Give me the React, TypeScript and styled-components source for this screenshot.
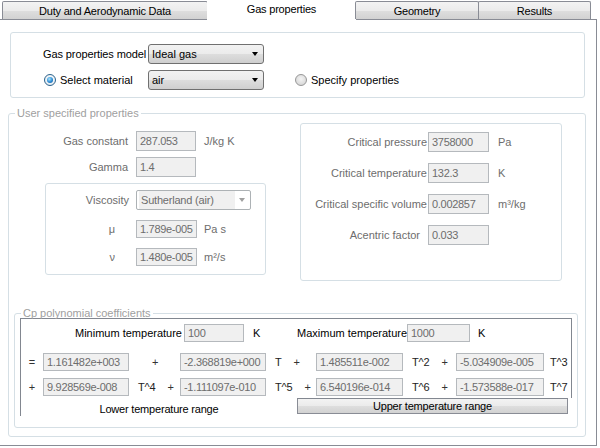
import React from 'react';
import styled, { createGlobalStyle, css } from 'styled-components';

const GlobalStyle = createGlobalStyle`
  html, body { margin: 0; padding: 0; background: #fff; }
  body {
    font-family: "Liberation Sans", Arial, sans-serif;
    font-size: 11px;
    color: #000;
  }
  * { box-sizing: border-box; }
`;

const GROUP_BORDER = '#d5dfe5';
const GRAY_TEXT = '#6d6d6d';
const TAB_BORDER = '#898c95';

const Window = styled.div`
  width: 600px;
  height: 448px;
  overflow: hidden;
  background: #fff;
`;

const TabStrip = styled.div`
  display: flex;
  align-items: flex-end;
  height: 19px;
  padding-left: 2px;
`;

const Tab = styled.div<{ $w: number; $active?: boolean }>`
  position: relative;
  z-index: 1;
  width: ${(p) => p.$w}px;
  display: flex;
  align-items: center;
  justify-content: center;
  white-space: nowrap;
  letter-spacing: -0.2px;
  ${(p) =>
    p.$active
      ? css`
          height: 20px;
          margin-bottom: -1px;
          padding-bottom: 3px;
          background: #fff;
        `
      : css`
          height: 18px;
          padding-top: 1px;
          border: 1px solid ${TAB_BORDER};
          border-bottom: none;
          border-radius: 2px 2px 0 0;
          background: linear-gradient(#f3f3f3 0%, #ebebeb 50%, #dedede 51%, #d2d2d2 100%);
          & + & {
            margin-left: -1px;
          }
        `}
`;

const Panel = styled.div`
  width: 597px;
  height: 427px;
  border: 1px solid ${TAB_BORDER};
  border-left: none;
  padding: 12px 10px 0 8px;
`;

const ModelBox = styled.div`
  margin: 0 1px 0 2px;
  height: 66px;
  border: 1px solid ${GROUP_BORDER};
  border-radius: 3px;
  padding: 11px 0 0 32px;
  display: grid;
  grid-template-columns: 105px 116px auto;
  grid-auto-rows: 20px;
  row-gap: 6px;
  align-items: center;
`;

const Label = styled.span<{ $gray?: boolean }>`
  color: ${(p) => (p.$gray ? GRAY_TEXT : '#000')};
  white-space: nowrap;
  letter-spacing: -0.1px;
`;

const Combo = styled.div<{ $w: number; $disabled?: boolean }>`
  position: relative;
  width: ${(p) => p.$w}px;
  height: 20px;
  display: flex;
  align-items: center;
  padding-left: 3px;
  white-space: nowrap;
  ${(p) =>
    p.$disabled
      ? css`
          border: 1px solid #adb2b5;
          border-radius: 2px;
          background: #fff;
          color: ${GRAY_TEXT};
        `
      : css`
          border: 1px solid #707070;
          border-radius: 3px;
          background: linear-gradient(#f2f2f2 0%, #ebebeb 50%, #dddddd 51%, #cfcfcf 100%);
        `}
`;

const ComboText = styled.span<{ $fill?: number }>`
  flex: ${(p) => (p.$fill ? `0 0 ${p.$fill}px` : '1')};
  height: 100%;
  display: flex;
  align-items: center;
  ${(p) =>
    p.$fill &&
    css`
      background: #f0f0f0;
      margin-left: -1px;
      padding-left: 2px;
      letter-spacing: -0.2px;
    `}
`;

const Arrow = styled.span<{ $disabled?: boolean }>`
  position: absolute;
  right: 5px;
  top: 7px;
  width: 0;
  height: 0;
  border-left: 3.5px solid transparent;
  border-right: 3.5px solid transparent;
  border-top: 4px solid ${(p) => (p.$disabled ? '#a0a0a0' : '#000')};
`;

const RadioLabel = styled.label<{ $offset?: number }>`
  display: flex;
  align-items: center;
  gap: 4px;
  margin-left: ${(p) => p.$offset ?? 1}px;
  white-space: nowrap;
`;

const RadioDot = styled.span<{ $checked?: boolean }>`
  width: 12px;
  height: 12px;
  border-radius: 50%;
  display: flex;
  align-items: center;
  justify-content: center;
  ${(p) =>
    p.$checked
      ? css`
          border: 1px solid #2c628b;
          background: radial-gradient(circle at 50% 40%, #ffffff, #dbe6ee);
          &::after {
            content: '';
            width: 6px;
            height: 6px;
            border-radius: 50%;
            background: radial-gradient(circle at 40% 35%, #a8e6ff 0%, #2a8ad4 55%, #0d4f8f 100%);
          }
        `
      : css`
          border: 1px solid #979797;
          background: radial-gradient(circle at 50% 40%, #f4f4f4, #cfcfcf);
        `}
`;

const UserSet = styled.fieldset`
  margin: 9px 0 0 0;
  padding: 3px 0 8px 0;
  border: 1px solid ${GROUP_BORDER};
  border-radius: 3px;
  min-width: 0;
`;

const Legend = styled.legend<{ $indent: number }>`
  margin-left: ${(p) => p.$indent}px;
  padding: 0 2px;
  color: #a0a0a0;
  line-height: 13px;
`;

const PropsGrid = styled.div`
  display: grid;
  grid-template-columns: 291px 262px;
  align-items: start;
`;

const LeftCol = styled.div`
  padding-top: 8px;
`;

const PropRow = styled.div`
  display: grid;
  grid-template-columns: 119px 60px auto;
  column-gap: 8px;
  align-items: center;
  height: 20px;
  margin-bottom: 6px;
`;

const RightLabel = styled.span<{ $w: number; $pad?: number; $gray?: boolean }>`
  width: ${(p) => p.$w}px;
  flex: 0 0 auto;
  text-align: right;
  padding-right: ${(p) => p.$pad ?? 0}px;
  color: ${(p) => (p.$gray ? GRAY_TEXT : '#000')};
  white-space: nowrap;
`;

const Field = styled.div<{ $w: number; $h?: number }>`
  width: ${(p) => p.$w}px;
  height: ${(p) => p.$h ?? 20}px;
  flex: 0 0 auto;
  border: 1px solid #b5b9bd;
  background: #f0f0f0;
  color: ${GRAY_TEXT};
  padding-left: 3px;
  display: flex;
  align-items: center;
  white-space: nowrap;
  overflow: hidden;
  letter-spacing: -0.3px;
`;

const Unit = styled.span<{ $gap?: number }>`
  margin-left: ${(p) => p.$gap ?? 0}px;
  color: ${GRAY_TEXT};
  white-space: nowrap;
`;

const ViscosityBox = styled.div`
  margin: 5px 0 0 36px;
  width: 221px;
  height: 92px;
  border: 1px solid ${GROUP_BORDER};
  border-radius: 3px;
  padding-top: 6px;
`;

const VRow = styled.div<{ $h: number; $gap?: number }>`
  display: flex;
  align-items: center;
  height: ${(p) => p.$h}px;
  margin-top: ${(p) => p.$gap ?? 0}px;
`;

const CriticalBox = styled.div`
  width: 262px;
  height: 158px;
  border: 1px solid ${GROUP_BORDER};
  border-radius: 3px;
  padding-top: 8px;
  display: flex;
  flex-direction: column;
  gap: 11px;
`;

const CRow = styled.div`
  display: flex;
  align-items: center;
  height: 20px;
`;

const CpSet = styled.fieldset`
  margin: 26px 7px 0 5px;
  padding: 0 0 11px 0;
  border: 1px solid ${GROUP_BORDER};
  border-radius: 3px;
  min-width: 0;
`;

const CoeffFrame = styled.div`
  margin: -2px 5px 0 5px;
  border: 1px solid #828790;
  border-bottom: none;
  padding: 5px 0 2px 0;
`;

const TempRow = styled.div`
  display: flex;
  align-items: center;
  height: 18px;
`;

const TempUnit = styled.span<{ $w?: number; $pad: number }>`
  width: ${(p) => (p.$w ? `${p.$w}px` : 'auto')};
  padding-left: ${(p) => p.$pad}px;
  flex: 0 0 auto;
`;

const CoeffRow = styled.div<{ $gap: number }>`
  display: grid;
  grid-template-columns: 22px 86px 51px 86px 50px 87px 53px 88px auto;
  align-items: center;
  height: 18px;
  margin-top: ${(p) => p.$gap}px;
`;

const Sign = styled.span`
  text-align: center;
  color: #333;
`;

const Joiner = styled.span<{ $last?: boolean }>`
  display: flex;
  align-items: center;
  padding-left: ${(p) => (p.$last ? 6 : 9)}px;
  gap: 12px;
  color: #222;
  white-space: nowrap;
  letter-spacing: -0.2px;
`;

const Plus = styled.span<{ $solo?: boolean }>`
  margin-left: ${(p) => (p.$solo ? 14 : 0)}px;
  color: #333;
`;

const RangeTabs = styled.div`
  display: flex;
  margin: 0 5px;
  height: 18px;
`;

const RangeTab = styled.div<{ $active?: boolean; $w: number }>`
  width: ${(p) => p.$w}px;
  display: flex;
  align-items: center;
  justify-content: center;
  white-space: nowrap;
  letter-spacing: -0.2px;
  ${(p) =>
    p.$active
      ? css`
          height: 18px;
          padding-top: 4px;
          border-left: 1px solid #828790;
          background: #fff;
        `
      : css`
          height: 16px;
          border: 1px solid ${TAB_BORDER};
          border-top-color: #828790;
          background: linear-gradient(#f3f3f3 0%, #ebebeb 50%, #dedede 51%, #d2d2d2 100%);
        `}
`;

const coeffRows = [
  {
    sign: '=',
    cells: [
      { value: '1.161482e+003', join: '' },
      { value: '-2.368819e+000', join: 'T' },
      { value: '1.485511e-002', join: 'T^2' },
      { value: '-5.034909e-005', join: 'T^3' },
    ],
  },
  {
    sign: '+',
    cells: [
      { value: '9.928569e-008', join: 'T^4' },
      { value: '-1.111097e-010', join: 'T^5' },
      { value: '6.540196e-014', join: 'T^6' },
      { value: '-1.573588e-017', join: 'T^7' },
    ],
  },
];

const fieldWidths = [86, 86, 87, 88];

const critical = [
  { label: 'Critical pressure', value: '3758000', unit: 'Pa' },
  { label: 'Critical temperature', value: '132.3', unit: 'K' },
  { label: 'Critical specific volume', value: '0.002857', unit: 'm³/kg' },
  { label: 'Acentric factor', value: '0.033', unit: '', pad: 7 },
];

export default function App() {
  return (
    <Window>
      <GlobalStyle />
      <TabStrip>
        <Tab $w={206}>Duty and Aerodynamic Data</Tab>
        <Tab $w={149} $active>
          Gas properties
        </Tab>
        <Tab $w={124}>Geometry</Tab>
        <Tab $w={113}>Results</Tab>
      </TabStrip>
      <Panel>
        <ModelBox>
          <Label>Gas properties model</Label>
          <Combo $w={116}>
            <ComboText>Ideal gas</ComboText>
            <Arrow />
          </Combo>
          <span />
          <RadioLabel>
            <RadioDot $checked />
            Select material
          </RadioLabel>
          <Combo $w={116}>
            <ComboText>air</ComboText>
            <Arrow />
          </Combo>
          <RadioLabel $offset={31}>
            <RadioDot />
            Specify properties
          </RadioLabel>
        </ModelBox>

        <UserSet>
          <Legend $indent={6}>User specified properties</Legend>
          <PropsGrid>
            <LeftCol>
              <PropRow>
                <RightLabel $w={119} $gray>
                  Gas constant
                </RightLabel>
                <Field $w={60}>287.053</Field>
                <Unit>J/kg K</Unit>
              </PropRow>
              <PropRow>
                <RightLabel $w={119} $gray>
                  Gamma
                </RightLabel>
                <Field $w={60}>1.4</Field>
                <span />
              </PropRow>
              <ViscosityBox>
                <VRow $h={20}>
                  <RightLabel $w={83} $gray>
                    Viscosity
                  </RightLabel>
                  <Unit $gap={7}>
                    <Combo $w={115} $disabled>
                      <ComboText $fill={96}>Sutherland (air)</ComboText>
                      <Arrow $disabled />
                    </Combo>
                  </Unit>
                </VRow>
                <VRow $h={18} $gap={10}>
                  <RightLabel $w={83} $pad={14} $gray>
                    μ
                  </RightLabel>
                  <Unit $gap={7}>
                    <Field $w={61} $h={18}>
                      1.789e-005
                    </Field>
                  </Unit>
                  <Unit $gap={7}>Pa s</Unit>
                </VRow>
                <VRow $h={18} $gap={10}>
                  <RightLabel $w={83} $pad={14} $gray>
                    ν
                  </RightLabel>
                  <Unit $gap={7}>
                    <Field $w={61} $h={18}>
                      1.480e-005
                    </Field>
                  </Unit>
                  <Unit $gap={7}>m²/s</Unit>
                </VRow>
              </ViscosityBox>
            </LeftCol>

            <CriticalBox>
              {critical.map((c) => (
                <CRow key={c.label}>
                  <RightLabel $w={126} $pad={c.pad} $gray>
                    {c.label}
                  </RightLabel>
                  <Unit $gap={1}>
                    <Field $w={61}>{c.value}</Field>
                  </Unit>
                  {c.unit && <Unit $gap={9}>{c.unit}</Unit>}
                </CRow>
              ))}
            </CriticalBox>
          </PropsGrid>

          <CpSet>
            <Legend $indent={6}>Cp polynomial coefficients</Legend>
            <CoeffFrame>
              <TempRow>
                <RightLabel $w={161}>Minimum temperature</RightLabel>
                <Unit $gap={2}>
                  <Field $w={60} $h={18}>
                    100
                  </Field>
                </Unit>
                <TempUnit $w={53} $pad={9}>
                  K
                </TempUnit>
                <RightLabel $w={108}>Maximum temperature</RightLabel>
                <Unit $gap={2}>
                  <Field $w={63} $h={18}>
                    1000
                  </Field>
                </Unit>
                <TempUnit $pad={8}>K</TempUnit>
              </TempRow>
              {coeffRows.map((row, ri) => (
                <CoeffRow key={ri} $gap={ri === 0 ? 11 : 7}>
                  <Sign>{row.sign}</Sign>
                  {row.cells.map((cell, ci) => (
                    <React.Fragment key={ci}>
                      {ci > 0 && (
                        <Joiner>
                          {row.cells[ci - 1].join && <span>{row.cells[ci - 1].join}</span>}
                          <Plus $solo={!row.cells[ci - 1].join}>+</Plus>
                        </Joiner>
                      )}
                      <Field $w={fieldWidths[ci]} $h={18}>
                        {cell.value}
                      </Field>
                    </React.Fragment>
                  ))}
                  <Joiner $last>{row.cells[3].join}</Joiner>
                </CoeffRow>
              ))}
            </CoeffFrame>
            <RangeTabs>
              <RangeTab $w={277} $active>
                Lower temperature range
              </RangeTab>
              <RangeTab $w={271}>Upper temperature range</RangeTab>
            </RangeTabs>
          </CpSet>
        </UserSet>
      </Panel>
    </Window>
  );
}
